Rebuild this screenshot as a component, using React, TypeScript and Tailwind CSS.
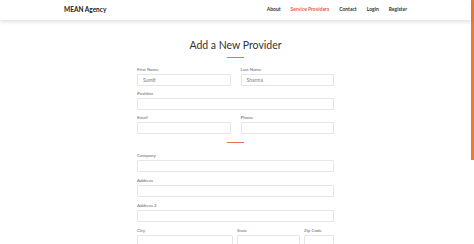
import React from 'react'

const font = { fontFamily: 'Lato, "Open Sans", sans-serif' }

function Field({ label, value, className }: { label: string; value?: string; className?: string }) {
  return (
    <div className={className}>
      <div className="h-[7px] text-[4.5px] leading-[7px] text-[#666]">{label}</div>
      <div className="mt-[1px] h-[12px] border border-[#e6e6e6] rounded-[1px] bg-white px-[5px] text-[5px] leading-[10px] text-[#777]">
        {value}
      </div>
    </div>
  )
}

export default function App() {
  const links = ['About', 'Service Providers', 'Contact', 'Login', 'Register']

  return (
    <div className="flex w-full h-[244px] overflow-hidden bg-white" style={font}>
      <main className="flex-1 min-w-0">
        {/* Navbar */}
        <header className="h-[20px] bg-white shadow-[0_2px_4px_rgba(0,0,0,0.12)] relative z-10">
          <div className="max-w-[343px] mx-auto h-full flex items-center justify-between">
            <span className="text-[6.5px] font-bold text-[#222]">MEAN Agency</span>
            <nav className="flex items-center gap-[10px]">
              {links.map((l) => (
                <a
                  key={l}
                  className={
                    'text-[5px] font-bold ' +
                    (l === 'Service Providers' ? 'text-[#e9573f]' : 'text-[#333]')
                  }
                >
                  {l}
                </a>
              ))}
            </nav>
          </div>
        </header>

        {/* Form */}
        <section className="w-[197px] mx-auto pt-[18px]">
          <h1 className="text-center text-[10.5px] leading-[14px] text-[#333]">Add a New Provider</h1>
          <div className="mx-auto mt-[5px] w-[17px] h-[1px] bg-[#e9704f]" />

          <div className="mt-[8px] grid grid-cols-2 gap-x-[10px]">
            <Field label="First Name" value="Sumit" />
            <Field label="Last Name" value="Sharma" />
          </div>
          <Field label="Position" className="mt-[4px]" />
          <div className="mt-[4px] grid grid-cols-2 gap-x-[10px]">
            <Field label="Email" />
            <Field label="Phone" />
          </div>

          <div className="mx-auto mt-[8px] w-[17px] h-[1px] bg-[#e9704f]" />

          <Field label="Company" className="mt-[9px]" />
          <Field label="Address" className="mt-[5px]" />
          <Field label="Address 2" className="mt-[5px]" />
          <div className="mt-[5px] flex gap-[4px]">
            <Field label="City" className="w-[96px]" />
            <Field label="State" className="w-[63px]" />
            <Field label="Zip Code" className="flex-1" />
          </div>
        </section>
      </main>

      {/* scrollbar */}
      <div className="w-[3px] bg-white">
        <div className="h-[160px] bg-[#f07a2f]" />
      </div>
    </div>
  )
}
